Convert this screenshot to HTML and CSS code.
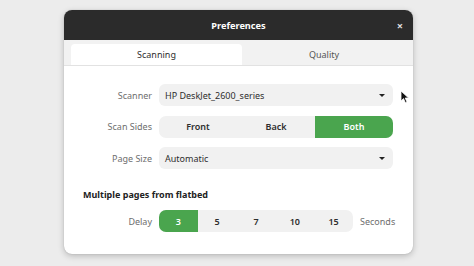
FILE: index.html
```html
<!DOCTYPE html>
<html>
<head>
<meta charset="utf-8">
<link rel="stylesheet" href="styles.css">
</head>
<body>
<div class="dialog">
  <div class="header">
    <span class="title">Preferences</span>
    <span class="close">×</span>
  </div>
  <div class="tabs">
    <div class="tab active">Scanning</div>
    <div class="tab">Quality</div>
  </div>
  <div class="content">
    <div class="form">
      <div class="label">Scanner</div>
      <div class="combo"><span>HP DeskJet_2600_series</span><span class="arrow"></span></div>
      <div class="label">Scan Sides</div>
      <div class="seg three">
        <div class="opt">Front</div>
        <div class="opt">Back</div>
        <div class="opt on">Both</div>
      </div>
      <div class="label">Page Size</div>
      <div class="combo"><span>Automatic</span><span class="arrow"></span></div>
    </div>
    <div class="section">Multiple pages from flatbed</div>
    <div class="delay">
      <div class="label">Delay</div>
      <div class="seg five">
        <div class="opt on">3</div>
        <div class="opt">5</div>
        <div class="opt">7</div>
        <div class="opt">10</div>
        <div class="opt">15</div>
      </div>
      <div class="unit">Seconds</div>
    </div>
  </div>
</div>
<svg class="cursor" width="10" height="14" viewBox="0 0 10 14"><path d="M1 1 L1 11 L3.5 8.6 L5.4 12.8 L7 12 L5.2 8 L8.6 8 Z" fill="#111" stroke="#fff" stroke-width="0.8"/></svg>
</body>
</html>
```
FILE: styles.css
```css
html, body { margin: 0; padding: 0; }
body {
  width: 474px; height: 266px; overflow: hidden;
  background: #ececec;
  font-family: "Noto Sans", "Open Sans", sans-serif;
  font-size: 9px;
  color: #2e2e2e;
  position: relative;
}
.dialog {
  position: absolute; left: 64px; top: 10px;
  width: 349px; height: 244px;
  background: #fff;
  border-radius: 8px;
  box-shadow: 0 2px 6px rgba(0,0,0,0.22), 0 0 1px rgba(0,0,0,0.25);
  display: flex; flex-direction: column;
  overflow: hidden;
}
.header {
  height: 30px; background: #2b2b2b; color: #fff;
  display: flex; align-items: center; justify-content: center;
  position: relative;
}
.title { font-weight: bold; font-size: 9.2px; }
.close { position: absolute; right: 10px; top: 8px; font-size: 11px; font-weight: bold; color: #ddd; }
.tabs {
  height: 26px; box-sizing: border-box;
  background: #f2f2f2; border-bottom: 1px solid #e2e2e2;
  display: flex; padding: 4px 7px 0 7px;
}
.tab {
  flex: 1; display: flex; align-items: center; justify-content: center;
  color: #555; border-radius: 4px 4px 0 0;
}
.tab.active { flex: 0 0 171px; background: #fff; color: #2e2e2e; }
.content { padding: 18px 20px 0 19px; }
.form {
  display: grid; grid-template-columns: 69px 234px; column-gap: 7px; row-gap: 9.5px;
  align-items: center;
}
.label { text-align: right; color: #6e6e6e; }
.combo {
  height: 22px; background: #f1f1f1; border-radius: 6px;
  display: flex; align-items: center; justify-content: space-between;
  padding: 0 8px 0 6px;
}
.arrow {
  width: 0; height: 0;
  border-left: 3px solid transparent; border-right: 3px solid transparent;
  border-top: 3px solid #222;
}
.seg {
  height: 22px; background: #f1f1f1; border-radius: 7px; overflow: hidden;
  display: flex;
}
.opt { flex: 1; display: flex; align-items: center; justify-content: center; font-weight: 600; color: #2e2e2e; }
.opt.on { background: #4aa54e; color: #fff; }
.section { font-weight: bold; margin-top: 19px; color: #222; }
.delay {
  display: grid; grid-template-columns: 69px 194px auto; column-gap: 7px;
  align-items: center; margin-top: 9px;
}
.unit { color: #6e6e6e; }
.cursor { position: absolute; left: 400px; top: 90px; }
```
